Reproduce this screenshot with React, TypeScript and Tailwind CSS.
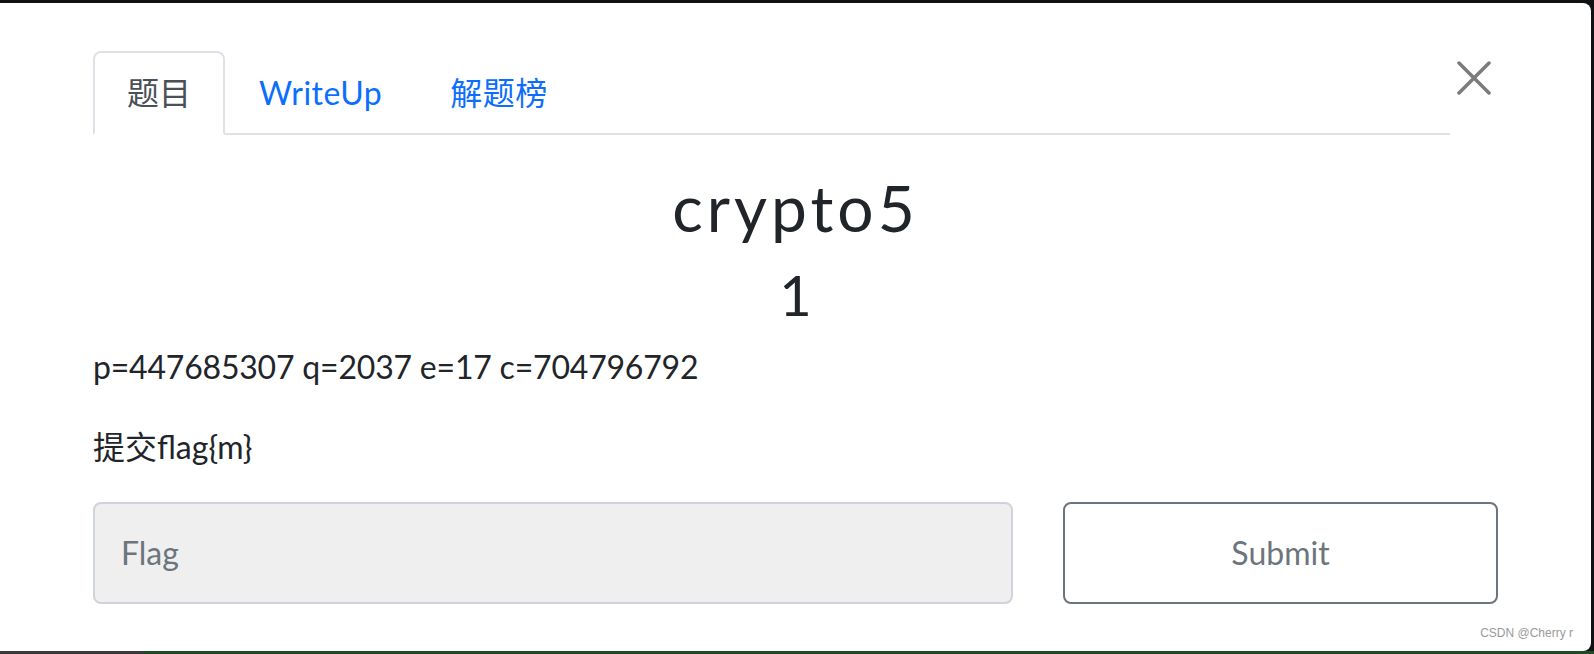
import React from "react";

const tabs = [
  { label: "题目", active: true },
  { label: "WriteUp", active: false },
  { label: "解题榜", active: false },
];

const App = () => {
  return (
    <div
      className="w-[1594px] h-[654px] bg-[#0f1112] flex flex-col overflow-hidden"
      style={{ fontFamily: 'Lato, "Noto Sans CJK SC", sans-serif' }}
    >
      <div className="h-[3px] shrink-0" />

      <div className="relative flex-1 mr-[3px] bg-white rounded-r-[8px] flex flex-col">
        {/* Header: tabs + close */}
        <div className="flex items-start px-[93px] pt-[48px]">
          <ul className="flex flex-1 border-b-2 border-[#dee2e6]">
            {tabs.map((tab) => (
              <li key={tab.label} className="-mb-[2px]">
                <a
                  href="#"
                  className={
                    tab.active
                      ? "block px-[32px] py-[16px] text-[32px] leading-[48px] text-[#495057] bg-white border-2 border-b-white border-[#dee2e6] rounded-t-[8px]"
                      : "block px-[32px] py-[16px] text-[32px] leading-[48px] tracking-[0.5px] text-[#0d6efd] border-2 border-transparent"
                  }
                >
                  {tab.label}
                </a>
              </li>
            ))}
          </ul>
          <button className="w-[48px] h-[48px] mt-[3px] flex items-center justify-center">
            <svg width="34" height="34" viewBox="0 0 34 34" fill="none">
              <path
                d="M2 2L32 32M32 2L2 32"
                stroke="#7b7b7b"
                strokeWidth="3.5"
                strokeLinecap="round"
              />
            </svg>
          </button>
        </div>

        {/* Body */}
        <div className="px-[93px] pt-[35px] text-[#212529]">
          <h2 className="text-center text-[64px] leading-[1.2] tracking-[4px] font-normal">
            crypto5
          </h2>
          <h3 className="text-center text-[56px] leading-[1.2] font-normal mt-[14px]">
            1
          </h3>
          <div className="mt-[15px] text-[32px] leading-[48px]">
            <p className="mb-[32px] tracking-[-0.2px]">p=447685307 q=2037 e=17 c=704796792</p>
            <p>提交flag{"{m}"}</p>
          </div>

          <form className="flex gap-[50px] mt-[31px]">
            <input
              type="text"
              placeholder="Flag"
              className="w-[920px] h-[102px] px-[26px] text-[32px] bg-[#efefef] border-2 border-[#ced4da] rounded-[8px] placeholder:text-[#6c757d] outline-none"
            />
            <button
              type="button"
              className="flex-1 h-[102px] text-[32px] text-[#6c757d] border-2 border-[#6c757d] rounded-[8px] bg-white"
            >
              Submit
            </button>
          </form>
        </div>

        <span
          className="absolute right-[18px] bottom-[9px] text-[12px] text-[#9a9a9a]"
          style={{ fontFamily: '"Liberation Sans", sans-serif' }}
        >
          CSDN @Cherry r
        </span>
      </div>

      <div className="h-[3px] shrink-0 flex">
        <div className="w-[143px] bg-[#3a3a3a]" />
        <div className="flex-1 bg-[#1e4a25]" />
      </div>
    </div>
  );
};

export default App;
